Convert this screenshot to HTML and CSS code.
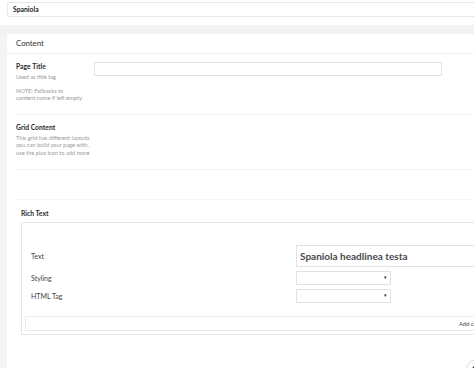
FILE: index.html
```html
<!DOCTYPE html>
<html lang="en">
<head>
    <meta charset="UTF-8">
    <title>Spaniola</title>
    <link rel="stylesheet" href="styles.css">
</head>
<body>
    <!-- name header -->
    <header class="top">
        <div class="name-box">Spaniola</div>
    </header>
    <div class="tabs"></div>

    <!-- content panel -->
    <main class="panel">
        <div class="panel-head">Content</div>

        <div class="prop">
            <div class="prop-label">
                <h4>Page Title</h4>
                <p class="desc">Used as title tag</p>
                <p class="desc note">NOTE: Fallbacks to<br>content.name if left empty</p>
            </div>
            <div class="prop-editor">
                <div class="text-input"></div>
            </div>
        </div>

        <div class="prop">
            <div class="prop-label">
                <h4>Grid Content</h4>
                <p class="desc">This grid has different layouts<br>you can build your page with,<br>use the plus icon to add more</p>
            </div>
        </div>

        <div class="grid-area">
            <div class="grid-row"></div>
            <div class="control">
                <div class="control-title">Rich Text</div>
                <div class="control-box">
                    <div class="field field-text">
                        <span class="field-label">Text</span>
                        <div class="headline-input">Spaniola headlinea testa</div>
                    </div>
                    <div class="field">
                        <span class="field-label">Styling</span>
                        <div class="select"><span class="caret">&#9662;</span></div>
                    </div>
                    <div class="field">
                        <span class="field-label">HTML Tag</span>
                        <div class="select"><span class="caret">&#9662;</span></div>
                    </div>
                    <div class="add-bar"><span>Add content</span></div>
                </div>
            </div>
        </div>
    </main>

    <!-- floating help button -->
    <div class="help-btn">1</div>
</body>
</html>
```

FILE: styles.css
```css
* {
    margin: 0;
    padding: 0;
    box-sizing: border-box;
}

html, body {
    width: 474px;
    height: 368px;
    overflow: hidden;
}

body {
    font-family: Lato, "Open Sans", sans-serif;
    background-color: #f4f4f5;
    color: #303033;
    position: relative;
}

/* 顶部名称栏 */
.top {
    height: 25px;
    background-color: #fff;
    padding: 2px 0 0 7px;
}

.name-box {
    width: 480px;
    height: 15px;
    border: 1px solid #e9e9eb;
    font-size: 6.8px;
    font-weight: 700;
    line-height: 13px;
    padding-left: 5px;
    color: #222;
}

.tabs {
    height: 9px;
    background-color: #f3f3f5;
}

/* 内容面板 */
.panel {
    margin-left: 7px;
    background-color: #fff;
    height: 340px;
}

.panel-head {
    height: 20px;
    line-height: 19px;
    padding-left: 9px;
    font-size: 7.8px;
    color: #303033;
    border-bottom: 1px solid #f0f0f1;
}

.prop {
    margin-left: 9px;
    display: flex;
    padding: 8px 0 12px;
    border-bottom: 1px solid #f2f2f3;
}

.prop-label {
    width: 78px;
    flex-shrink: 0;
}

.prop-label h4 {
    font-size: 6.8px;
    font-weight: 700;
    line-height: 8px;
    color: #2a2a2d;
}

.desc {
    font-size: 5.7px;
    line-height: 7.6px;
    color: #9a999e;
    margin-top: 3px;
    white-space: nowrap;
}

.desc.note {
    margin-top: 6px;
}

.prop-editor {
    flex: 1;
}

.text-input {
    width: 348px;
    height: 14px;
    border: 1px solid #e2e2e4;
}

/* 网格区域 */
.grid-area {
    margin-left: 9px;
}

.grid-row {
    height: 30px;
    border-bottom: 1px solid #f5f5f6;
}

.control {
    padding: 9px 0 0 5px;
}

.control-title {
    font-size: 6.8px;
    font-weight: 700;
    line-height: 8px;
    color: #2a2a2d;
}

.control-box {
    margin-top: 5px;
    width: 480px;
    border: 1px solid #e6e6e8;
    padding: 22px 3px 3px;
    display: flex;
    flex-direction: column;
    gap: 4px;
}

.field {
    display: flex;
    align-items: center;
    min-height: 14px;
}

.field-label {
    width: 271px;
    padding-left: 6px;
    font-size: 7px;
    color: #444;
}

.headline-input {
    width: 200px;
    height: 22px;
    border: 1px solid #e2e2e4;
    padding-left: 3px;
    font-size: 10px;
    font-weight: 700;
    line-height: 20px;
    color: #4a494e;
}

.select {
    width: 95px;
    height: 14px;
    border: 1px solid #e2e2e4;
    position: relative;
}

.caret {
    position: absolute;
    right: 3px;
    top: 2px;
    font-size: 5px;
    color: #222;
}

.add-bar {
    margin-top: 9px;
    height: 15px;
    border: 1px solid #ececee;
    display: flex;
    align-items: center;
    padding-left: 433px;
    font-size: 5.8px;
    color: #444;
    white-space: nowrap;
}

/* 帮助按钮 */
.help-btn {
    position: absolute;
    left: 466px;
    top: 359px;
    width: 22px;
    height: 22px;
    border-radius: 50%;
    border: 1px solid #d8d8da;
    background-color: #fff;
    font-size: 7px;
    font-weight: 700;
    padding: 5px 0 0 5px;
    color: #222;
}
```
